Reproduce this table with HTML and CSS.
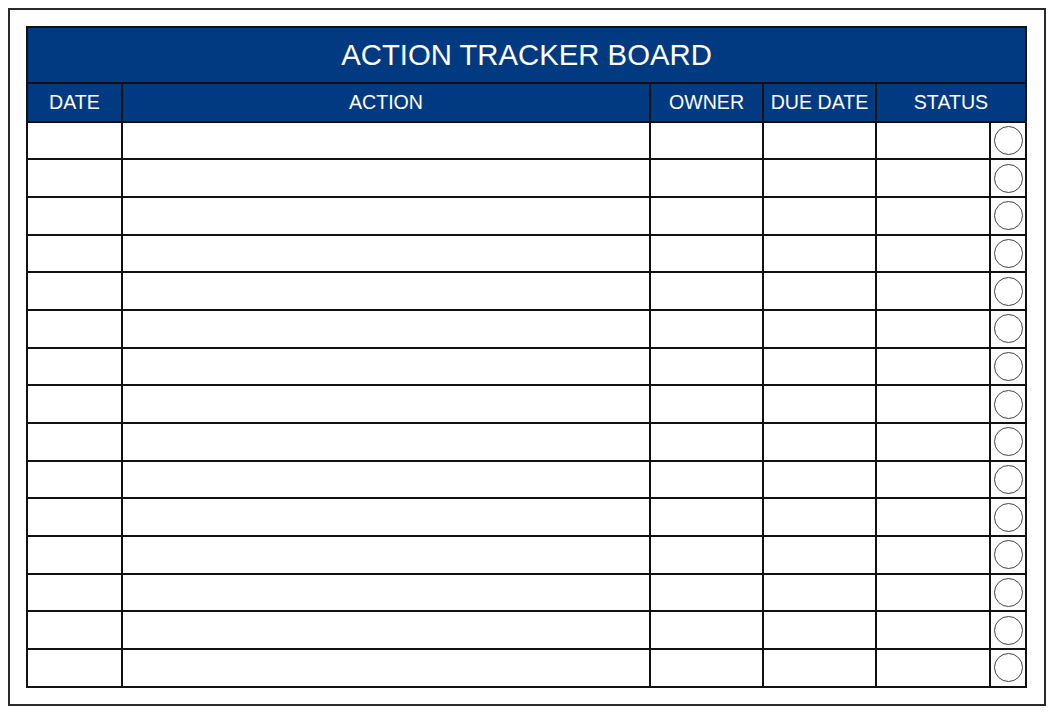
FILE: index.html
```html
<!DOCTYPE html>
<html>
<head>
<meta charset="utf-8">
<link rel="stylesheet" href="styles.css">
</head>
<body>
<div class="frame">
  <div class="board">
    <div class="title">ACTION TRACKER BOARD</div>
    <div class="head">DATE</div>
    <div class="head">ACTION</div>
    <div class="head">OWNER</div>
    <div class="head">DUE DATE</div>
    <div class="head status">STATUS</div>
    <div class="cell"></div><div class="cell"></div><div class="cell"></div><div class="cell"></div><div class="cell"></div><div class="cell dot"><span class="circle"></span></div>
    <div class="cell"></div><div class="cell"></div><div class="cell"></div><div class="cell"></div><div class="cell"></div><div class="cell dot"><span class="circle"></span></div>
    <div class="cell"></div><div class="cell"></div><div class="cell"></div><div class="cell"></div><div class="cell"></div><div class="cell dot"><span class="circle"></span></div>
    <div class="cell"></div><div class="cell"></div><div class="cell"></div><div class="cell"></div><div class="cell"></div><div class="cell dot"><span class="circle"></span></div>
    <div class="cell"></div><div class="cell"></div><div class="cell"></div><div class="cell"></div><div class="cell"></div><div class="cell dot"><span class="circle"></span></div>
    <div class="cell"></div><div class="cell"></div><div class="cell"></div><div class="cell"></div><div class="cell"></div><div class="cell dot"><span class="circle"></span></div>
    <div class="cell"></div><div class="cell"></div><div class="cell"></div><div class="cell"></div><div class="cell"></div><div class="cell dot"><span class="circle"></span></div>
    <div class="cell"></div><div class="cell"></div><div class="cell"></div><div class="cell"></div><div class="cell"></div><div class="cell dot"><span class="circle"></span></div>
    <div class="cell"></div><div class="cell"></div><div class="cell"></div><div class="cell"></div><div class="cell"></div><div class="cell dot"><span class="circle"></span></div>
    <div class="cell"></div><div class="cell"></div><div class="cell"></div><div class="cell"></div><div class="cell"></div><div class="cell dot"><span class="circle"></span></div>
    <div class="cell"></div><div class="cell"></div><div class="cell"></div><div class="cell"></div><div class="cell"></div><div class="cell dot"><span class="circle"></span></div>
    <div class="cell"></div><div class="cell"></div><div class="cell"></div><div class="cell"></div><div class="cell"></div><div class="cell dot"><span class="circle"></span></div>
    <div class="cell"></div><div class="cell"></div><div class="cell"></div><div class="cell"></div><div class="cell"></div><div class="cell dot"><span class="circle"></span></div>
    <div class="cell"></div><div class="cell"></div><div class="cell"></div><div class="cell"></div><div class="cell"></div><div class="cell dot"><span class="circle"></span></div>
    <div class="cell"></div><div class="cell"></div><div class="cell"></div><div class="cell"></div><div class="cell"></div><div class="cell dot"><span class="circle"></span></div>
  </div>
</div>
</body>
</html>
```
FILE: styles.css
```css
html, body {
  margin: 0;
  padding: 0;
  background: #ffffff;
}
body {
  padding: 8px;
  font-family: "Liberation Sans", Arial, sans-serif;
}
.frame {
  box-sizing: border-box;
  width: 1038px;
  height: 698px;
  border: 2px solid #2a2a2a;
  padding: 16px;
}
.board {
  display: grid;
  width: 1001px;
  box-sizing: border-box;
  grid-template-columns: 93px 526px 111px 111px 112px 34px;
  grid-template-rows: 54px 36.5px repeat(15, 35.7px);
  gap: 2px;
  padding: 2px;
  background: #111111;
}
.title {
  grid-column: 1 / -1;
  background: #023a82;
  color: #ffffff;
  font-size: 29.3px;
  display: flex;
  align-items: center;
  justify-content: center;
}
.head {
  background: #023a82;
  color: #ffffff;
  font-size: 19.6px;
  display: flex;
  align-items: center;
  justify-content: center;
}
.head.status {
  grid-column: span 2;
}
.cell {
  background: #ffffff;
}
.dot {
  display: flex;
  align-items: center;
  justify-content: center;
  background: #fdfdfd;
}
.circle {
  box-sizing: border-box;
  width: 29px;
  height: 29px;
  border: 1px solid #444444;
  border-radius: 50%;
  background: #ffffff;
}
```
